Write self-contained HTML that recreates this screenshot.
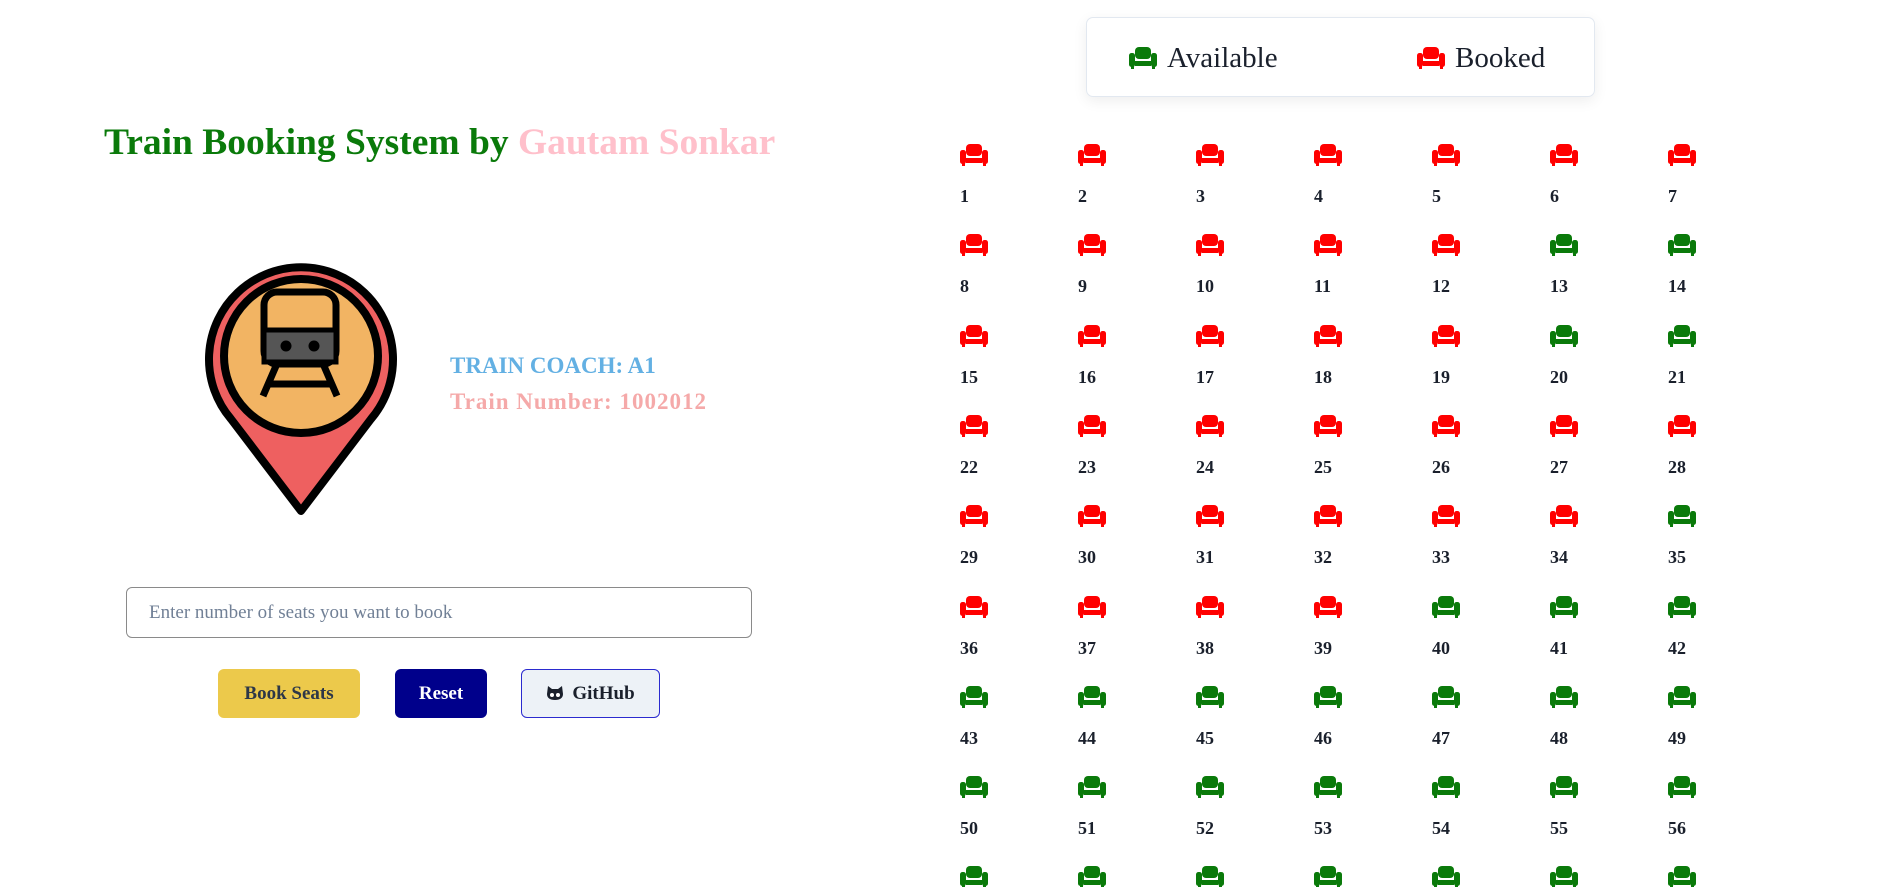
<!DOCTYPE html>
<html><head><meta charset="utf-8"><style>
*{margin:0;padding:0;box-sizing:border-box}
html,body{width:1887px;height:887px;overflow:hidden}
body{background:#fff;font-family:"Liberation Serif",serif;position:relative;color:#1a202c}
.abs{position:absolute}
h1{position:absolute;left:104px;top:119px;font-size:37.5px;font-weight:bold;color:#0a7a0a;white-space:nowrap;line-height:48px}
h1 span{color:#ffc0cb}
.info{position:absolute;left:450px;font-weight:bold;font-size:23px;white-space:nowrap}
.inp{position:absolute;left:126px;top:587px;width:626px;height:51px;border:1px solid #8a8a8a;border-radius:6px;font-size:19px;color:#718096;padding-left:22px;line-height:49px}
.btn{position:absolute;top:669px;height:49px;border-radius:6px;font-weight:bold;font-size:19px;line-height:49px;text-align:center}
.legend{position:absolute;left:1086px;top:17px;width:509px;height:80px;border:1px solid #e2e8f0;border-radius:7px;box-shadow:0 4px 14px rgba(0,0,0,.07)}
.lg{position:absolute;top:22px;font-size:29px;line-height:36px;display:flex;align-items:center;gap:10px;color:#1a202c}
.s{position:absolute;width:118px;height:90px}
.s svg{position:absolute;left:1px;top:0;width:28px;height:22px}
.s b{position:absolute;left:1px;top:42px;font-size:18px;line-height:20px;color:#1a202c}
.r{color:#f00}.g{color:#0a7a0a}
</style></head><body>
<svg width="0" height="0" style="position:absolute"><defs><symbol id="c" viewBox="0 0 28 22"><rect x="6" y="0" width="16" height="12" rx="4" fill="currentColor"/><rect x="0" y="6" width="6" height="14" rx="2.5" fill="currentColor"/><rect x="22" y="6" width="6" height="14" rx="2.5" fill="currentColor"/><rect x="6" y="14" width="16" height="5" fill="currentColor"/><rect x="2" y="19" width="3" height="3" fill="currentColor"/><rect x="23" y="19" width="3" height="3" fill="currentColor"/></symbol></defs></svg>

<h1>Train Booking System by <span>Gautam Sonkar</span></h1>

<svg class="abs" style="left:162px;top:244px" width="277" height="277" viewBox="0 0 277 277">
<path d="M139,267 L69,175 A92,92 0 1 1 209,175 Z" fill="#ee6060" stroke="#000" stroke-width="8" stroke-linejoin="round"/>
<circle cx="139" cy="112" r="77" fill="#f2b463" stroke="#000" stroke-width="8"/>
<rect x="102" y="48" width="72" height="72" rx="13" fill="#f2b463" stroke="#000" stroke-width="7"/>
<rect x="102" y="86" width="72" height="32" fill="#555" stroke="#000" stroke-width="5"/>
<circle cx="124" cy="102" r="5.5" fill="#000"/><circle cx="152" cy="102" r="5.5" fill="#000"/>
<path d="M114,122 L101,152 M162,122 L175,152 M106,140 L170,140" stroke="#000" stroke-width="7" fill="none"/>
</svg>

<div class="info" style="top:353px;color:#63b0e3">TRAIN COACH: A1</div>
<div class="info" style="top:389px;color:#f5a9a9;letter-spacing:1px">Train Number: 1002012</div>

<div class="inp">Enter number of seats you want to book</div>
<div class="btn" style="left:218px;width:142px;background:#ecc94b;color:#2d3748">Book Seats</div>
<div class="btn" style="left:395px;width:92px;background:#00008b;color:#fff">Reset</div>
<div class="btn" style="left:521px;width:139px;background:#edf2f7;border:1px solid #2b2bcf;color:#1a202c;line-height:47px"><svg width="18" height="16" viewBox="0 0 18 16" style="vertical-align:-2px;margin-right:8px"><path d="M2,1 L6,4 H12 L16,1 L17,9 C17,13 14,15 9,15 C4,15 1,13 1,9 Z" fill="#1a202c"/><circle cx="6" cy="10" r="2" fill="#fff"/><circle cx="12" cy="10" r="2" fill="#fff"/></svg>GitHub</div>

<div class="legend">
<div class="lg" style="left:42px"><svg width="28" height="22" class="g"><use href="#c"/></svg>Available</div>
<div class="lg" style="left:330px"><svg width="28" height="22" class="r"><use href="#c"/></svg>Booked</div>
</div>

<div id="grid"></div>
<script>
var booked=[1,2,3,4,5,6,7,8,9,10,11,12,15,16,17,18,19,22,23,24,25,26,27,28,29,30,31,32,33,34,36,37,38,39];
var h='';
for(var i=1;i<=63;i++){var c=(i-1)%7,r=Math.floor((i-1)/7);
h+='<div class="s '+(booked.indexOf(i)>=0?'r':'g')+'" style="left:'+(959+c*118)+'px;top:'+(144+r*90.3)+'px"><svg><use href="#c"/></svg><b>'+i+'</b></div>';}
document.getElementById('grid').innerHTML=h;
</script>
</body></html>
